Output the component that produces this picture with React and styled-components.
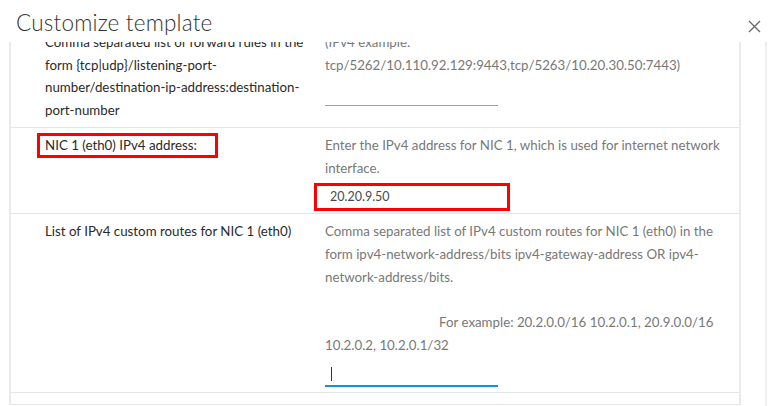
import React from "react";
import styled, { createGlobalStyle } from "styled-components";

const GlobalStyle = createGlobalStyle`
  html, body { margin: 0; padding: 0; background: #ffffff; }
  body { overflow: hidden; font-family: Lato, "Noto Sans", sans-serif; }
  * { box-sizing: border-box; }
`;

const Dialog = styled.div`
  width: 768px;
  height: 406px;
  display: flex;
  flex-direction: column;
  background: #fff;
  overflow: hidden;
`;

const Header = styled.header`
  height: 42px;
  flex: none;
  display: flex;
  align-items: center;
  justify-content: space-between;
  padding: 0 5px 0 16px;
`;

const Title = styled.h3`
  margin: 2px 0 0;
  font-family: Lato, "Noto Sans", sans-serif;
  font-weight: 300;
  font-size: 22.5px;
  color: #333;
  letter-spacing: 0.2px;
`;

const CloseButton = styled.button`
  width: 18px;
  height: 18px;
  padding: 0;
  margin-top: 10px;
  border: none;
  background: none;
  display: flex;
  align-items: center;
  justify-content: center;
  color: #666;
  cursor: pointer;
`;

const Body = styled.div`
  flex: 1;
  display: flex;
  overflow: hidden;
`;

const Table = styled.div`
  margin-left: 9px;
  width: 732px;
  border-left: 2px solid #e8ebed;
  border-right: 2px solid #e8ebed;
  margin-top: -17px;
  align-self: flex-start;
`;

const Gutter = styled.div`
  width: 26px;
  border-right: 2px solid #eceff1;
`;

const Row = styled.div`
  display: grid;
  grid-template-columns: 280px 1fr;
  padding: 6px 15px 5px 34px;
  border-bottom: 1px solid #e3e6e8;
  font-size: 13.3px;
  line-height: 22.7px;
`;

const Label = styled.div`
  color: #2a2a2a;
  padding-right: 8px;
`;

const Highlight = styled.span`
  display: inline-block;
  border: 3px solid #f00;
  line-height: 19px;
  padding: 0 18px 0 5px;
  margin: -1px 0 -1px -8px;
`;

const Description = styled.div`
  color: #787878;
`;

const Paragraph = styled.p`
  margin: ${(p) => (p.$gap ? "22.7px" : "0")} 0 0;
  text-indent: ${(p) => p.$indent || 0}px;
`;

const Field = styled.div`
  margin-top: 6px;
  width: 173px;
  height: ${(p) => (p.$focused ? "25px" : "24px")};
  padding: 0 6px;
  display: flex;
  align-items: center;
  border-bottom: ${(p) => (p.$focused ? "2px solid #1592d2" : "1px solid #9aa0a3")};
  color: #333;
`;

const HighlightField = styled.div`
  margin: 4px 0 -3px -11px;
  width: 196px;
  height: 28px;
  border: 3px solid #f00;
  padding-left: 13px;
  display: flex;
  align-items: center;
  color: #4a4a4a;
  font-size: 12.5px;
`;

const Caret = styled.span`
  display: block;
  width: 1px;
  height: 14px;
  background: #333;
`;

const CloseIcon = () => (
  <svg width="13" height="13" viewBox="0 0 13 13" fill="none" stroke="currentColor" strokeWidth="1.3">
    <path d="M1 1 L12 12 M12 1 L1 12" />
  </svg>
);

const forwardRulesLabel =
  "Comma separated list of forward rules in the form {tcp|udp}/listening-port-number/destination-ip-address:destination-port-number";

export default function App() {
  return (
    <>
      <GlobalStyle />
      <Dialog>
        <Header>
          <Title>Customize template</Title>
          <CloseButton aria-label="Close">
            <CloseIcon />
          </CloseButton>
        </Header>
        <Body>
          <Table>
            <Row>
              <Label>{forwardRulesLabel}</Label>
              <Description>
                <Paragraph>(IPv4 example: tcp/5262/10.110.92.129:9443,tcp/5263/10.20.30.50:7443)</Paragraph>
                <Field />
              </Description>
            </Row>
            <Row>
              <Label>
                <Highlight>NIC 1 (eth0) IPv4 address:</Highlight>
              </Label>
              <Description>
                <Paragraph>Enter the IPv4 address for NIC 1, which is used for internet network interface.</Paragraph>
                <HighlightField>20.20.9.50</HighlightField>
              </Description>
            </Row>
            <Row>
              <Label>List of IPv4 custom routes for NIC 1 (eth0)</Label>
              <Description>
                <Paragraph>
                  Comma separated list of IPv4 custom routes for NIC 1 (eth0) in the form ipv4-network-address/bits ipv4-gateway-address OR ipv4-network-address/bits.
                </Paragraph>
                <Paragraph $gap $indent={114}>
                  For example: 20.2.0.0/16 10.2.0.1, 20.9.0.0/16 10.2.0.2, 10.2.0.1/32
                </Paragraph>
                <Field $focused>
                  <Caret />
                </Field>
              </Description>
            </Row>
            <Row>
              <Label />
              <Description />
            </Row>
          </Table>
          <Gutter />
        </Body>
      </Dialog>
    </>
  );
}
